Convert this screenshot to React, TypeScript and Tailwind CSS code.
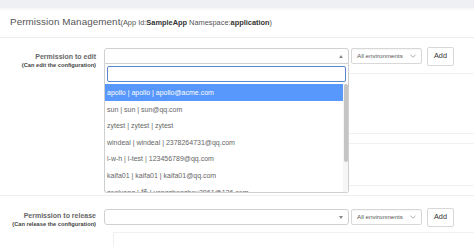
import React from "react";

const users = [
  "apollo | apollo | apollo@acme.com",
  "sun | sun | sun@qq.com",
  "zytest | zytest | zytest",
  "windeal | windeal | 2378264731@qq.com",
  "l-w-h | l-test | 123456789@qq.com",
  "kaifa01 | kaifa01 | kaifa01@qq.com",
  "zealyang | 杨 | yangzhenzhou2861@126.com",
];

function EnvSelect() {
  return (
    <div className="ml-[2px] h-[16px] w-[71px] border border-[#d8d8d8] rounded-[2px] bg-white flex items-center pl-[5px] pr-[4px] text-[6.2px] text-[#555] shadow-[inset_0_1px_1px_rgba(0,0,0,0.04)]">
      <span className="flex-1">All environments</span>
      <svg width="6" height="4" viewBox="0 0 6 4" className="mr-[1px]">
        <path d="M0.5 0.8 L3 3.2 L5.5 0.8" fill="none" stroke="#999" strokeWidth="0.8" />
      </svg>
    </div>
  );
}

function AddButton() {
  return (
    <div className="ml-[5px] h-[19px] w-[27px] border border-[#d8d8d8] rounded-[2px] bg-white flex items-center justify-center text-[7.3px] text-[#333]">
      Add
    </div>
  );
}

export default function App() {
  return (
    <div className="w-[474px] h-[247px] overflow-hidden bg-white relative font-['Liberation_Sans',Arial,sans-serif]">
      <div className="h-[8px] bg-[#eef0f4] shadow-[0_1px_3px_rgba(0,0,0,0.06)]" />
      <div className="h-[30px] flex items-center pl-[10px] border-b border-[#eeeeee] text-[#555]">
        <span className="text-[9.8px] tracking-[0.1px]">Permission Management</span>
        <span className="text-[7.4px] mt-[1px]">
          (App Id:<b className="text-[#333]">SampleApp</b> Namespace:<b className="text-[#333]">application</b>)
        </span>
      </div>

      {/* Edit section */}
      <div className="flex h-[158px] border-b border-[#eeeeee]">
        <div className="w-[96px] shrink-0 pt-[13.5px] text-right">
          <div className="text-[7px] leading-[9px] font-bold text-[#666]">Permission to edit</div>
          <div className="text-[5.7px] leading-[8px] font-bold text-[#444]">(Can edit the configuration)</div>
        </div>
        <div className="ml-[8px] flex-1 pt-[10px] relative">
          <div className="flex items-center h-[16px]">
            <div className="h-[16px] w-[245px] border border-[#d0d0d0] rounded-t-[3px] bg-white flex items-center justify-end pr-[5px]">
              <div className="w-0 h-0 border-l-[2.5px] border-r-[2.5px] border-b-[3px] border-l-transparent border-r-transparent border-b-[#888]" />
            </div>
            <EnvSelect />
            <AddButton />
          </div>
          <div className="ml-[9px] mt-[9px] h-[61px] border-y border-l border-[#f0f0f0]" />
          <div className="ml-[9px] mt-[9px] h-[43px] border-y border-l border-[#f0f0f0]" />

          {/* dropdown */}
          <div className="absolute left-0 top-[26px] w-[245px] h-[129px] bg-white border-x border-b border-[#cfcfcf] rounded-b-[3px] flex flex-col">
            <div className="mx-[2px] mt-[2px] h-[16px] border border-[#5a86d0] rounded-[2px] bg-white" />
            <div className="mt-[2px] flex flex-1 overflow-hidden">
              <div className="flex-1 overflow-hidden">
                {users.map((u, i) => (
                  <div
                    key={u}
                    className={
                      "h-[16.6px] leading-[17px] pl-[2px] text-[7px] whitespace-nowrap font-['Liberation_Sans','Noto_Sans_CJK_SC',sans-serif] " +
                      (i === 0 ? "bg-[#5897fb] text-white" : "text-[#666]")
                    }
                  >
                    {u}
                  </div>
                ))}
              </div>
              <div className="w-[5px] bg-[#f6f6f6] pl-[0.5px]">
                <div className="h-[78px] w-[4px] rounded-[2px] bg-[#c4c4c4]" />
              </div>
            </div>
          </div>
        </div>
      </div>

      {/* Release section */}
      <div className="flex">
        <div className="w-[96px] shrink-0 pt-[14.5px] text-right">
          <div className="text-[7px] leading-[9px] font-bold text-[#666]">Permission to release</div>
          <div className="text-[5.7px] leading-[8px] font-bold text-[#444]">(Can release the configuration)</div>
        </div>
        <div className="ml-[8px] flex-1 pt-[13px]">
          <div className="flex items-center h-[16px]">
            <div className="h-[16px] w-[245px] border border-[#d0d0d0] rounded-[3px] bg-white flex items-center justify-end pr-[5px]">
              <div className="w-0 h-0 border-l-[2.5px] border-r-[2.5px] border-t-[3px] border-l-transparent border-r-transparent border-t-[#888]" />
            </div>
            <EnvSelect />
            <AddButton />
          </div>
          <div className="ml-[9px] mt-[7px] h-[40px] border-t border-l border-[#f0f0f0]" />
        </div>
      </div>
    </div>
  );
}
